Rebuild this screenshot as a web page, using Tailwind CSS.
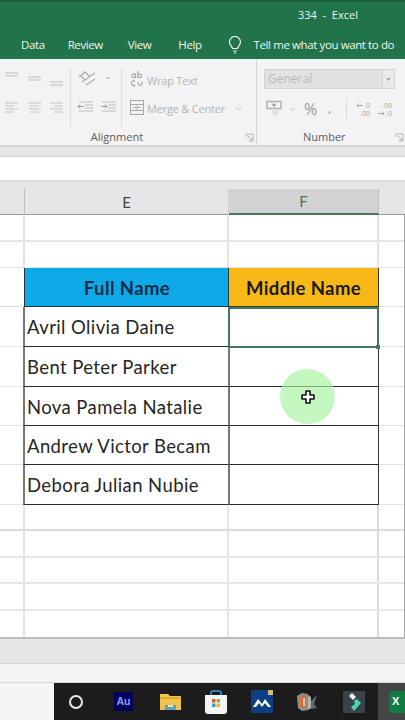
<!DOCTYPE html>
<html>
<head>
  <title>Excel</title>
  <script src="https://cdn.jsdelivr.net/npm/@tailwindcss/browser@4"></script>
</head>
<body class="w-[405px] h-[720px] overflow-hidden bg-white font-['Open_Sans',sans-serif]">

<!-- Title bar and tabs -->
<div class="h-[59px] bg-[#21734a] border-t-2 border-[#1b5f3c] text-[#eef5f0] relative">
  <div class="h-[27px] pl-[298px] flex items-center text-[11px] whitespace-pre">334  -  Excel</div>
  <div class="h-[30px] pt-[1px] flex items-center text-[11.5px] tracking-[-0.4px]">
    <span class="ml-[21px]">Data</span>
    <span class="ml-[23px]">Review</span>
    <span class="ml-[25px]">View</span>
    <span class="ml-[27px]">Help</span>
    <svg class="ml-[26px]" width="14" height="18" viewBox="0 0 14 18" fill="none" stroke="#eef5f0" stroke-width="1.2"><path d="M4.5 12.5C4 10 1.5 9 1.5 6a5.5 5.5 0 0 1 11 0c0 3-2.500 4-3 6.500z"/><path d="M5 15h4M6 17h2"/></svg>
    <span class="ml-[12px] whitespace-nowrap">Tell me what you want to do</span>
  </div>
</div>

<!-- Ribbon -->
<div class="h-[88px] bg-[#f3f2f4] border-b-2 border-[#d6d5d8] flex text-[#b4b4b6]">
  <div class="w-[257px] border-r border-[#d4d4d6] flex flex-col">
    <div class="h-[61px] mt-[9px] flex">
      <div class="w-[71px] border-r border-[#dcdcde] flex flex-col">
        <svg width="70" height="30" viewBox="0 0 70 30" fill="none" stroke="#bdbdbf"><path d="M5 5h13M5 8h13M28 9h13M28 12h13M50 14h13M50 17h13"/></svg>
        <svg class="mt-[1px]" width="70" height="20" viewBox="0 0 70 20" fill="none" stroke="#c2c2c4"><path d="M5 4h13M5 7h9M5 10h13M5 13h9M28 4h13M30 7h9M28 10h13M30 13h9M50 4h13M54 7h9M50 10h13M54 13h9"/></svg>
      </div>
      <div class="w-[51px] border-r border-[#dcdcde] flex flex-col">
        <div class="h-[30px] flex items-start">
          <svg class="ml-[6px] mt-[1px]" width="40" height="20" viewBox="0 0 40 20" fill="none" stroke="#aeaeb0" stroke-width="1.300"><path d="M2 8l6-5 5 5M4 7l4 4M5 13l13-9M9 16l9-6"/><path d="M29 8l2 2 2-2" stroke-width="1"/></svg>
        </div>
        <svg width="50" height="20" viewBox="0 0 50 20" fill="none" stroke="#bcbcbe"><path d="M8 4h14M14 7h8M14 10h8M8 13h14"/><path d="M13 8.500H7l2-2M7 8.500l2 2" stroke="#9a9a9c"/><path d="M31 4h14M37 7h8M37 10h8M31 13h14"/><path d="M30 8.500h6l-2-2M36 8.500l-2 2" stroke="#9a9a9c"/></svg>
      </div>
      <div class="flex-1 flex flex-col text-[11px]">
        <div class="h-[30px] flex items-start pl-[9px]">
          <svg class="mt-[1px]" width="13" height="20" viewBox="0 0 14 20" fill="none" stroke="#a4a4a6" stroke-width="1.200"><path d="M1 6.500a2 2 0 1 0 4 0a2 2 0 1 0-4 0M5 4v5M7.500 1v8M7.500 6.500a2 2 0 1 0 4 0a2 2 0 1 0-4 0M4.500 12.500a2.500 2.500 0 1 0 0 4M8 13v2a2 2 0 0 0 4 0v-2"/></svg>
          <span class="ml-[3px] mt-[3px] leading-[20px] whitespace-nowrap tracking-[-0.2px]">Wrap Text</span>
        </div>
        <div class="h-[20px] flex items-center pl-[7px]">
          <svg width="16" height="18" viewBox="0 0 16 18" fill="none" stroke="#a8a8aa"><rect x="1.500" y="1.500" width="13" height="14"/><path d="M1.500 5.500h13M1.500 11.500h13M8 5.500v2M8 9.500v2M4 8.500h8"/></svg>
          <span class="ml-[2px] pt-[2px] whitespace-nowrap tracking-[-0.2px]">Merge &amp; Center</span>
          <svg class="ml-[10px]" width="7" height="5" viewBox="0 0 7 5" fill="none" stroke="#c4c4c6"><path d="M1 1l2.500 2.500L6 1"/></svg>
        </div>
      </div>
    </div>
    <div class="flex-1 flex items-center relative pr-[22px] pt-[2px]">
      <span class="flex-1 text-center text-[11px] text-[#5d5d5f]">Alignment</span>
      <svg class="absolute left-[245px] top-[6px]" width="9" height="9" viewBox="0 0 9 9" fill="none" stroke="#b8b8ba"><path d="M1 4V1h7v7H4M3 3l4 4M7 5v2H5"/></svg>
    </div>
  </div>
  <div class="flex-1 flex flex-col pl-[7px]">
    <div class="mt-[10px] w-[131px] h-[22px] bg-[#e2e2e4] border border-[#d2d2d4] flex items-center text-[12px] text-[#b8b8ba]">
      <span class="flex-1 pl-[3px]">General</span>
      <span class="w-[12px] h-full bg-[#eaeaec] border-l border-[#d2d2d4] flex items-center justify-center">
        <svg width="5" height="3" viewBox="0 0 5 3" fill="#a8a8aa"><path d="M0 0h5L2.500 3z"/></svg>
      </span>
    </div>
    <div class="mt-[10px] h-[20px] flex items-center">
      <svg class="ml-[2px]" width="18" height="18" viewBox="0 0 18 18" fill="none" stroke="#b0b0b2"><rect x="1" y="1.500" width="14" height="7" stroke-width="1.500"/><path d="M8 3v4M6 5h4" stroke="#8e8e90"/><path d="M6 11h7M6 13h7M7 15h4" stroke="#d0d0d2"/></svg>
      <svg class="ml-[5px]" width="7" height="5" viewBox="0 0 7 5" fill="none" stroke="#c4c4c6"><path d="M1 1l2.500 2.500L6 1"/></svg>
      <span class="ml-[8px] text-[16px] text-[#9c9c9e] leading-none">%</span>
      <span class="ml-[11px] text-[10px] leading-none text-[#a4a4a6] font-bold">,</span>
      <span class="ml-[15px] h-[20px] border-l border-[#dcdcde]"></span>
      <div class="ml-[6px] w-[17px] text-[7px] leading-[7px] gap-[1px] text-[#a8a8aa] flex flex-col items-end">
        <div class="flex items-center gap-px"><svg width="7" height="5" viewBox="0 0 7 5" fill="none" stroke="#a8a8aa"><path d="M7 2.500H1M3 .5l-2 2 2 2"/></svg><span>.0</span></div>
        <div>.00</div>
      </div>
      <div class="ml-[6px] w-[16px] text-[7px] leading-[7px] gap-[1px] text-[#a8a8aa] flex flex-col items-end">
        <div>.00</div>
        <div class="flex items-center gap-px"><svg width="7" height="5" viewBox="0 0 7 5" fill="none" stroke="#a8a8aa"><path d="M0 2.500h6M4 .5l2 2-2 2"/></svg><span>.0</span></div>
      </div>
    </div>
    <div class="mt-[8px] flex-1 flex items-center relative pt-[2px]">
      <span class="ml-[39px] text-[11px] text-[#5d5d5f]">Number</span>
      <svg class="absolute left-[131px] top-[6px]" width="9" height="9" viewBox="0 0 9 9" fill="none" stroke="#b8b8ba"><path d="M1 4V1h7v7H4M3 3l4 4M7 5v2H5"/></svg>
    </div>
  </div>
</div>

<!-- Formula bar area -->
<div class="h-[10px] bg-[#e6e5e8] border-b border-[#d2d2d4]"></div>
<div class="h-[23px] bg-white"></div>

<!-- Column headers -->
<div class="h-[35px] bg-[#e6e5e8] border-t-2 border-b border-t-[#dcdcde] border-b-[#9c9c9e] pt-[7px] grid grid-cols-[25px_204px_150px_1fr] text-[15px] font-['Lato',sans-serif]">
  <div class="border-r border-[#bdbdbf]"></div>
  <div class="border-r border-[#d0d0d2] flex items-center justify-center pt-[1px] text-[#444]">E</div>
  <div class="bg-[#d2d1d4] border-r border-[#bdbdbf] border-b-2 border-b-[#3f7a5a] flex items-center justify-center pt-[1px] text-[#3f7a5a]">F</div>
  <div></div>
</div>

<!-- Sheet -->
<div class="relative h-[422px] border-r border-[#a8a8aa] font-['Lato',sans-serif] text-[18.500px] text-[#262626] tracking-[0.4px]">
  <div class="h-[27px] grid grid-cols-[25px_204px_150px_1fr] border-b-2 border-[#e6e6e8]">
    <div class="border-r-2 border-[#e2e2e4]"></div><div class="border-r-2 border-[#e2e2e4]"></div><div class="border-r-2 border-[#e2e2e4]"></div><div></div>
  </div>
  <div class="h-[26px] grid grid-cols-[25px_204px_150px_1fr] border-b border-[#e2e2e4]">
    <div class="border-r-2 border-[#e2e2e4]"></div><div class="border-r-2 border-[#e2e2e4]"></div><div class="border-r-2 border-[#e2e2e4]"></div><div></div>
  </div>

  <!-- Table -->
  <div class="grid grid-cols-[25px_204px_150px_1fr] grid-rows-[39px_40px_40px_39px_39px_40px]">
    <div class="border-b border-[#dcdcde]"></div>
    <div class="bg-[#10a9e8] border-l border-b border-[#26343c] -ml-px flex items-center justify-center pt-[3px] font-bold text-[#0f2a4a]">Full Name</div>
    <div class="bg-[#f8b918] border-x border-b border-[#2f3e2f] -ml-px flex items-center justify-center pt-[3px] font-bold text-[#1a1a1a]">Middle Name</div>
    <div class="border-b border-[#e2e2e4]"></div>

    <div class="border-b border-[#e2e2e4]"></div>
    <div class="border-l-2 border-b border-l-[#777] border-b-[#2a2a2a] -ml-0.5 pl-[2px] pt-[3px] flex items-center">Avril Olivia Daine</div>
    <div class="relative border-l-2 border-b border-r border-l-[#777] border-b-[#2a2a2a] border-r-[#333] -ml-px"></div>
    <div class="border-b border-[#e2e2e4]"></div>

    <div class="border-b border-[#e2e2e4]"></div>
    <div class="border-l-2 border-b border-l-[#777] border-b-[#2a2a2a] -ml-0.5 pl-[2px] pt-[3px] flex items-center">Bent Peter Parker</div>
    <div class="border-l-2 border-b border-r border-l-[#777] border-b-[#2a2a2a] border-r-[#333] -ml-px"></div>
    <div class="border-b border-[#e2e2e4]"></div>

    <div class="border-b border-[#e2e2e4]"></div>
    <div class="border-l-2 border-b border-l-[#777] border-b-[#2a2a2a] -ml-0.5 pl-[2px] pt-[3px] flex items-center">Nova Pamela Natalie</div>
    <div class="border-l-2 border-b border-r border-l-[#777] border-b-[#2a2a2a] border-r-[#333] -ml-px"></div>
    <div class="border-b border-[#e2e2e4]"></div>

    <div class="border-b border-[#e2e2e4]"></div>
    <div class="border-l-2 border-b border-l-[#777] border-b-[#2a2a2a] -ml-0.5 pl-[2px] pt-[3px] flex items-center">Andrew Victor Becam</div>
    <div class="border-l-2 border-b border-r border-l-[#777] border-b-[#2a2a2a] border-r-[#333] -ml-px"></div>
    <div class="border-b border-[#e2e2e4]"></div>

    <div class="border-b border-[#e2e2e4]"></div>
    <div class="border-l-2 border-b border-l-[#777] border-b-[#2a2a2a] -ml-0.5 pl-[2px] pt-[3px] flex items-center">Debora Julian Nubie</div>
    <div class="border-l-2 border-b border-r border-l-[#777] border-b-[#2a2a2a] border-r-[#333] -ml-px"></div>
    <div class="border-b border-[#e2e2e4]"></div>
  </div>

  <!-- Empty rows -->
  <div class="h-[26px] grid grid-cols-[25px_204px_150px_1fr] border-b-2 border-[#dcdcde]">
    <div class="border-r-2 border-[#e2e2e4]"></div><div class="border-r-2 border-[#e6e6e8]"></div><div class="border-r-2 border-[#dcdcde]"></div><div></div>
  </div>
  <div class="h-[27px] grid grid-cols-[25px_204px_150px_1fr] border-b-2 border-[#e6e6e8]">
    <div class="border-r-2 border-[#e2e2e4]"></div><div class="border-r-2 border-[#e6e6e8]"></div><div class="border-r-2 border-[#dcdcde]"></div><div></div>
  </div>
  <div class="h-[26px] grid grid-cols-[25px_204px_150px_1fr] border-b-2 border-[#e6e6e8]">
    <div class="border-r-2 border-[#e2e2e4]"></div><div class="border-r-2 border-[#e6e6e8]"></div><div class="border-r-2 border-[#dcdcde]"></div><div></div>
  </div>
  <div class="h-[27px] grid grid-cols-[25px_204px_150px_1fr] border-b-2 border-[#e6e6e8]">
    <div class="border-r-2 border-[#e2e2e4]"></div><div class="border-r-2 border-[#e6e6e8]"></div><div class="border-r-2 border-[#dcdcde]"></div><div></div>
  </div>
  <div class="h-[26px] grid grid-cols-[25px_204px_150px_1fr]">
    <div class="border-r-2 border-[#e2e2e4]"></div><div class="border-r-2 border-[#e6e6e8]"></div><div class="border-r-2 border-[#dcdcde]"></div><div></div>
  </div>

  <!-- Selected cell F -->
  <div class="absolute left-[228px] top-[92px] w-[151px] h-[41px] border-2 border-[#3f7a5a]">
    <div class="absolute -right-[3px] -bottom-[3px] w-[4px] h-[4px] bg-[#3f7a5a]"></div>
  </div>

  <!-- Click highlight and cursor -->
  <div class="absolute left-[280px] top-[154px] w-[55px] h-[55px] rounded-full bg-[#a6f2a0]/65 flex items-center justify-center">
    <svg width="14" height="14" viewBox="0 0 14 14"><path d="M5 1h4v4h4v4H9v4H5V9H1V5h4z" fill="#fff" stroke="#111" stroke-width="1.600" stroke-linejoin="round"/></svg>
  </div>
</div>

<!-- Bottom bars -->
<div class="h-[27px] bg-[#e6e5e8] border-t-2 border-b border-t-[#bdbdbf] border-b-[#d6d6d8]"></div>
<div class="h-[19px] bg-[#f3f2f4] border-b border-[#d8d8da]"></div>

<!-- Taskbar -->
<div class="h-[37px] bg-[#f5f5f7] pl-[54px]">
  <div class="h-full bg-[#1c1c1c] flex items-center relative">
    <span class="absolute left-[15px] w-[14px] h-[14px] rounded-full border-2 border-[#e8e8e8]"></span>
    <span class="absolute left-[60px] w-[19px] h-[19px] bg-[#00005b] rounded-[2px] flex items-center justify-center text-[10.500px] font-bold text-[#9999ff] font-['Liberation_Sans',sans-serif]">Au</span>
    <svg class="absolute left-[106px]" width="21" height="18" viewBox="0 0 21 18"><path d="M0 1h8l2 2h11v14H0z" fill="#f0c24e"/><path d="M0 4h21v2H0z" fill="#e0a92e"/><path d="M5 17v-5h11v5z" fill="#5a9fc4"/><path d="M8 12h5v2H8z" fill="#f2e4b0"/></svg>
    <svg class="absolute left-[151px]" width="22" height="24" viewBox="0 0 22 24"><path d="M6 6V3a2 2 0 0 1 2-2h6a2 2 0 0 1 2 2v3" fill="none" stroke="#3a9ed6" stroke-width="1.500"/><path d="M0 5h22v16a3 3 0 0 1-3 3H3a3 3 0 0 1-3-3z" fill="#f4f4f4"/><path d="M7 9h3.500v3.500H7z" fill="#e8552d"/><path d="M11.500 9H15v3.500h-3.500z" fill="#7db83a"/><path d="M7 13.500h3.500V17H7z" fill="#2e9ee0"/><path d="M11.500 13.500H15V17h-3.500z" fill="#f4b81e"/></svg>
    <svg class="absolute left-[197px]" width="22" height="23" viewBox="0 0 22 23"><rect width="22" height="23" fill="#0d3f86" rx="1"/><path d="M17 0h5v5h-5z" fill="#d9b77c"/><path d="M2 17l5-8 4 5 3-5 6 8h-3l-3-4-3 4-3-4-3 4z" fill="#fff"/></svg>
    <svg class="absolute left-[242px]" width="22" height="20" viewBox="0 0 22 20"><path d="M1 4l5-3 6 1v16l-6 1-4-3z" fill="#8a8f94"/><path d="M4 5l6-2v13l-6-1z" fill="#dc6a2a"/><path d="M7 6h2v8H7z" fill="#f2c3a0"/><path d="M12 3l3 2v11l-3 2z" fill="#b5b3a8"/><path d="M15 9l6-6-3 9 3 4-6 1z" fill="#5b6a70"/></svg>
    <span class="absolute left-[289px] w-[22px] h-[22px] bg-[#38434a] flex items-center justify-center">
      <svg width="14" height="18" viewBox="0 0 14 18"><path d="M2 3l3-3 4 4-3 3z" fill="#f3f3f3"/><path d="M7 8l3-2 4 4-7 8-3-4 4-3z" fill="#4fd3b0"/></svg>
    </span>
    <div class="absolute right-0 top-0 h-full w-[27px] bg-[#454545] flex items-center pl-[11px] overflow-hidden">
      <span class="shrink-0 w-[22px] h-[22px] rounded-[2px] bg-[#107c41] text-[11px] font-bold text-white flex items-center pl-[3px] font-['Liberation_Sans',sans-serif]">X</span>
    </div>
  </div>
</div>

</body>
</html>
